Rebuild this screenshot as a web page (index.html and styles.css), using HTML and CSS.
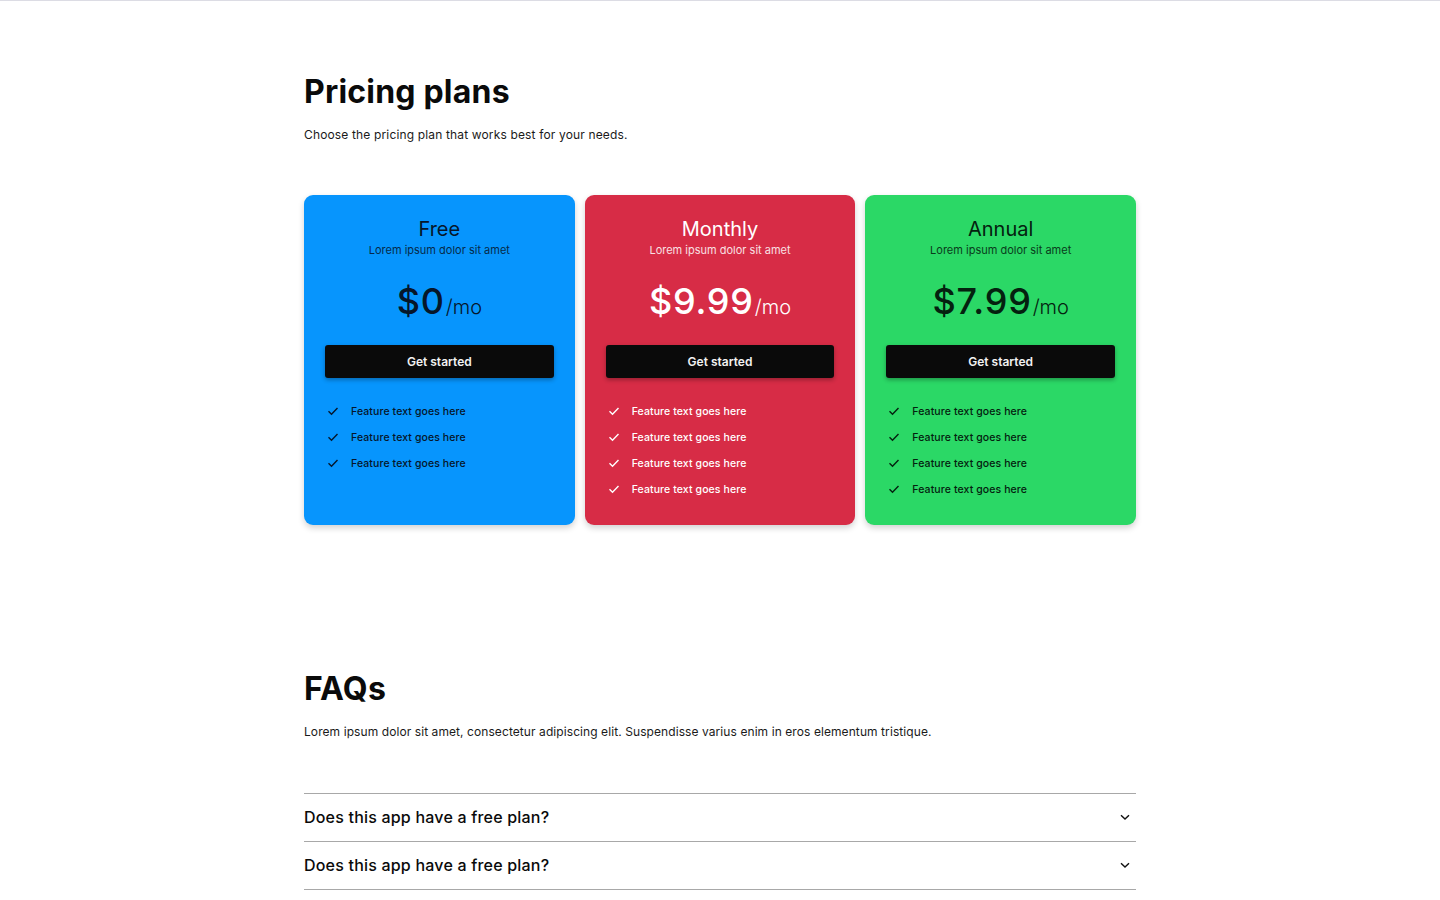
FILE: index.html
```html
<!DOCTYPE html>
<html lang="en">
<head>
<meta charset="utf-8">
<title>Pricing</title>
<link rel="stylesheet" href="styles.css">
</head>
<body>
<div class="topline"></div>
<main class="page">
  <section class="pricing">
    <h1 class="title">Pricing plans</h1>
    <p class="lead">Choose the pricing plan that works best for your needs.</p>
    <div class="cards">
      <article class="card card-blue">
        <h2 class="plan">Free</h2>
        <p class="plan-sub">Lorem ipsum dolor sit amet</p>
        <div class="price"><span class="amount">$0</span><span class="per">/mo</span></div>
        <button class="btn">Get started</button>
        <ul class="features">
          <li><svg class="check" viewBox="0 0 12 12"><path d="M1.5 6.2l3 3 6-6.2"/></svg>Feature text goes here</li>
          <li><svg class="check" viewBox="0 0 12 12"><path d="M1.5 6.2l3 3 6-6.2"/></svg>Feature text goes here</li>
          <li><svg class="check" viewBox="0 0 12 12"><path d="M1.5 6.2l3 3 6-6.2"/></svg>Feature text goes here</li>
        </ul>
      </article>
      <article class="card card-red">
        <h2 class="plan">Monthly</h2>
        <p class="plan-sub">Lorem ipsum dolor sit amet</p>
        <div class="price"><span class="amount">$9.99</span><span class="per">/mo</span></div>
        <button class="btn">Get started</button>
        <ul class="features">
          <li><svg class="check" viewBox="0 0 12 12"><path d="M1.5 6.2l3 3 6-6.2"/></svg>Feature text goes here</li>
          <li><svg class="check" viewBox="0 0 12 12"><path d="M1.5 6.2l3 3 6-6.2"/></svg>Feature text goes here</li>
          <li><svg class="check" viewBox="0 0 12 12"><path d="M1.5 6.2l3 3 6-6.2"/></svg>Feature text goes here</li>
          <li><svg class="check" viewBox="0 0 12 12"><path d="M1.5 6.2l3 3 6-6.2"/></svg>Feature text goes here</li>
        </ul>
      </article>
      <article class="card card-green">
        <h2 class="plan">Annual</h2>
        <p class="plan-sub">Lorem ipsum dolor sit amet</p>
        <div class="price"><span class="amount">$7.99</span><span class="per">/mo</span></div>
        <button class="btn">Get started</button>
        <ul class="features">
          <li><svg class="check" viewBox="0 0 12 12"><path d="M1.5 6.2l3 3 6-6.2"/></svg>Feature text goes here</li>
          <li><svg class="check" viewBox="0 0 12 12"><path d="M1.5 6.2l3 3 6-6.2"/></svg>Feature text goes here</li>
          <li><svg class="check" viewBox="0 0 12 12"><path d="M1.5 6.2l3 3 6-6.2"/></svg>Feature text goes here</li>
          <li><svg class="check" viewBox="0 0 12 12"><path d="M1.5 6.2l3 3 6-6.2"/></svg>Feature text goes here</li>
        </ul>
      </article>
    </div>
  </section>
  <section class="faq">
    <h1 class="title">FAQs</h1>
    <p class="lead">Lorem ipsum dolor sit amet, consectetur adipiscing elit. Suspendisse varius enim in eros elementum tristique.</p>
    <div class="faq-list">
      <div class="faq-item"><span>Does this app have a free plan?</span><svg class="chev" viewBox="0 0 12 12"><path d="M2 4.2l4 3.8 4-3.8"/></svg></div>
      <div class="faq-item"><span>Does this app have a free plan?</span><svg class="chev" viewBox="0 0 12 12"><path d="M2 4.2l4 3.8 4-3.8"/></svg></div>
    </div>
  </section>
</main>
</body>
</html>
```
FILE: styles.css
```css
* { box-sizing: border-box; }
html, body { margin: 0; padding: 0; background: #fff; }
body {
  font-family: "Inter", "Noto Sans", sans-serif;
  color: #0a0a0a;
  overflow: hidden;
  height: 900px;
}
.topline { height: 1px; background: #dcdce4; }
.page { width: 832px; margin: 0 auto; }
.pricing { padding-top: 70px; }
.title {
  margin: 0;
  font-size: 32px;
  font-weight: 700;
  line-height: 42px;
  letter-spacing: 0.2px;
}
.lead {
  margin: 13px 0 0;
  font-size: 12px;
  line-height: 18px;
  letter-spacing: 0.15px;
  color: #1a1a1a;
}
.cards {
  display: grid;
  grid-template-columns: repeat(3, 1fr);
  gap: 10px;
  margin-top: 51px;
}
.card {
  height: 330px;
  border-radius: 9px;
  padding: 20px 21px 0;
  text-align: center;
  box-shadow: 0 3px 6px rgba(0,0,0,0.18);
}
.card-blue { background: #0795fd; color: #06162a; }
.card-red { background: #d72c46; color: #fff; }
.card-green { background: #2bd866; color: #04210f; }
.plan { margin: 0; font-size: 20px; font-weight: 400; line-height: 28px; }
.plan-sub { margin: 0; font-size: 11px; line-height: 14px; opacity: 0.85; }
.price { margin-top: 24px; height: 40px; display: flex; justify-content: center; align-items: baseline; }
.amount { font-size: 36px; font-weight: 500; line-height: 40px; letter-spacing: 0.8px; }
.per { font-size: 20px; font-weight: 300; margin-left: 1px; }
.btn {
  display: block;
  width: 100%;
  height: 33px;
  margin-top: 24px;
  border: 0;
  border-radius: 3px;
  background: #0a0a0a;
  color: #f2f2f2;
  font-family: inherit;
  font-size: 12px;
  font-weight: 600;
  box-shadow: 0 2px 4px rgba(0,0,0,0.3);
}
.features { list-style: none; margin: 20px 0 0; padding: 0 0 0 2px; text-align: left; }
.features li {
  display: flex;
  align-items: center;
  height: 26px;
  font-size: 10.5px;
  font-weight: 500;
  letter-spacing: 0.1px;
}
.check { width: 12px; height: 12px; margin-right: 12px; fill: none; stroke: currentColor; stroke-width: 1.4; }
.faq { padding-top: 143px; }
.faq .lead { margin-top: 13px; letter-spacing: 0.08px; }
.faq-list { margin-top: 52px; border-top: 1.5px solid #a8a8a8; }
.faq-item {
  height: 48px;
  border-bottom: 1.5px solid #a8a8a8;
  display: flex;
  align-items: center;
  justify-content: space-between;
  padding-bottom: 1px;
  font-size: 16px;
  font-weight: 500;
  letter-spacing: 0.2px;
}
.chev { width: 12px; height: 12px; margin-right: 5px; fill: none; stroke: #111; stroke-width: 1.4; }
```
